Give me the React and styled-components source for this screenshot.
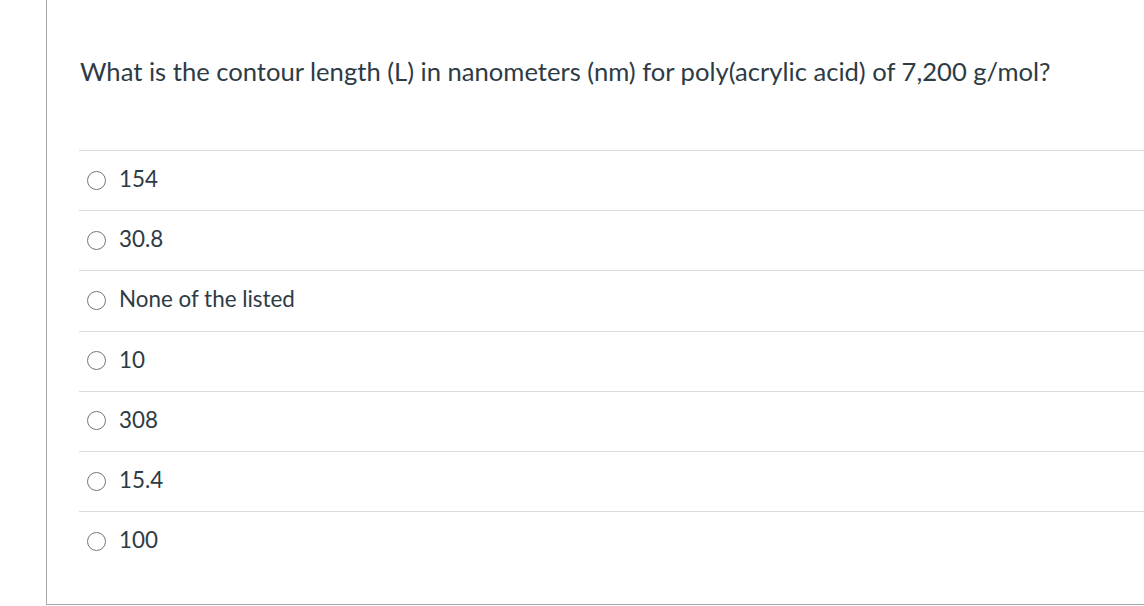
import { createGlobalStyle } from 'styled-components';
import styled from 'styled-components';

const GlobalStyle = createGlobalStyle`
  html, body {
    margin: 0;
    padding: 0;
    background: #fff;
    overflow: hidden;
  }
`;

const Page = styled.div`
  width: 1144px;
  height: 606px;
  padding-left: 46px;
  box-sizing: border-box;
`;

const Panel = styled.div`
  height: 605px;
  box-sizing: border-box;
  border-left: 1px solid #a9a9a9;
  border-bottom: 1px solid #a9a9a9;
  padding: 0 0 0 32px;
  font-family: Lato, 'Open Sans', sans-serif;
  color: #2d3b45;
`;

const Question = styled.div`
  padding-top: 53px;
  padding-left: 1px;
  height: 150px;
  box-sizing: border-box;
  font-size: 25.6px;
  line-height: 36px;
`;

const Answers = styled.div`
  display: flex;
  flex-direction: column;
`;

const Answer = styled.label`
  display: flex;
  align-items: center;
  gap: 13px;
  height: 60.2px;
  border-top: 1px solid #dcdcdc;
  padding: 0 0 4px 8px;
  box-sizing: border-box;
  font-size: 22.4px;
  cursor: pointer;
`;

const Radio = styled.span`
  width: 19px;
  height: 19px;
  margin-top: 3px;
  box-sizing: border-box;
  border: 1.5px solid #767676;
  border-radius: 50%;
  flex-shrink: 0;
`;

const answers = ['154', '30.8', 'None of the listed', '10', '308', '15.4', '100'];

const App = () => {
  return (
    <Page>
      <GlobalStyle />
      <Panel>
        <Question>
          What is the contour length (L) in nanometers (nm) for poly(acrylic acid) of 7,200 g/mol?
        </Question>
        <Answers>
          {answers.map((a) => (
            <Answer key={a}>
              <Radio />
              {a}
            </Answer>
          ))}
        </Answers>
      </Panel>
    </Page>
  );
};

export default App;
